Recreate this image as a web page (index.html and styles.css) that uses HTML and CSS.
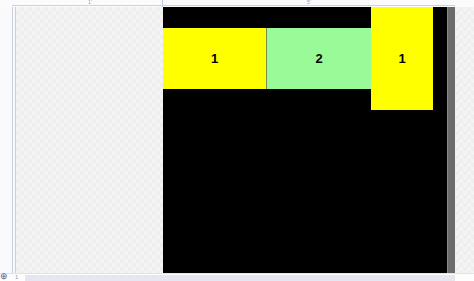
FILE: index.html
```html
<!DOCTYPE html>
<html>
<head>
<meta charset="utf-8">
<link rel="stylesheet" href="styles.css">
</head>
<body>
<div class="page">
  <div class="ruler-top">
    <span class="tick t1">1'</span>
    <span class="tick t2">5'</span>
  </div>
  <div class="ruler-left"></div>
  <div class="canvas-left"></div>
  <div class="stage">
    <div class="box yellow wide">1</div>
    <div class="box green wide">2</div>
    <div class="box yellow tall">1</div>
  </div>
  <div class="vscroll"></div>
  <div class="canvas-right"></div>
  <div class="bottom">
    <span class="corner">&#x2295;</span>
    <span class="bmark">1</span>
    <div class="hscroll"></div>
  </div>
</div>
</body>
</html>
```

FILE: styles.css
```css
html, body {
  margin: 0;
  padding: 0;
  width: 474px;
  height: 281px;
  overflow: hidden;
  background: #f7f7f7;
  font-family: "Liberation Sans", Arial, sans-serif;
}

.page {
  display: grid;
  grid-template-columns: 16px 147px 284px 8px 19px;
  grid-template-rows: 7px 266px 8px;
  width: 474px;
  height: 281px;
}

.ruler-top {
  grid-column: 1 / 6;
  grid-row: 1;
  position: relative;
  background: #fbfbfd;
  background-image:
    linear-gradient(to right, transparent 162px, #b8c6e0 162px, #b8c6e0 163px, transparent 163px),
    linear-gradient(to bottom, transparent 5px, #c9d1e3 5px, #c9d1e3 6px, transparent 6px);
  background-size: 474px 7px, 443px 7px;
  background-position: 0 0, 12px 0;
  background-repeat: no-repeat;
}

.tick {
  position: absolute;
  top: 0;
  font-size: 5px;
  color: #8c9cc0;
  line-height: 5px;
}
.t1 { left: 88px; }
.t2 { left: 307px; }

.ruler-left {
  grid-column: 1;
  grid-row: 2;
  background: #fafafc;
  background-image:
    linear-gradient(to right, transparent 12px, #c7cfe0 12px, #c7cfe0 13px, transparent 13px, transparent 15px, #c7cfe0 15px, #c7cfe0 16px);
}

.canvas-left, .canvas-right {
  grid-row: 2;
  background-color: #f1f1f1;
  background-image: repeating-conic-gradient(#eeeeee 0 25%, #f4f4f4 0 50%);
  background-size: 8px 8px;
}
.canvas-left { grid-column: 2; }
.canvas-right { grid-column: 5; }

.stage {
  grid-column: 3;
  grid-row: 2;
  background: #000;
  display: flex;
  align-items: flex-start;
}

.box {
  display: flex;
  align-items: center;
  justify-content: center;
  font-weight: bold;
  font-size: 13px;
  color: #000;
  box-sizing: border-box;
}

.yellow { background: #ffff00; }
.green { background: #98fb98; border-left: 1px solid #7a8a50; }

.wide {
  margin-top: 21px;
  height: 61px;
}
.box.yellow.wide { width: 103px; }
.box.green.wide { width: 105px; }

.tall {
  width: 62px;
  height: 103px;
}

.vscroll {
  grid-column: 4;
  grid-row: 2;
  background: #6b6b6b;
  border-left: 1px solid #8a8a8a;
  box-sizing: border-box;
}

.bottom {
  grid-column: 1 / 6;
  grid-row: 3;
  position: relative;
  background: #fdfdfe;
  border-top: 1px solid #dfe3ec;
  box-sizing: border-box;
}

.corner {
  position: absolute;
  left: 0;
  top: -2px;
  font-size: 9px;
  line-height: 9px;
  color: #55658a;
}

.bmark {
  position: absolute;
  left: 15px;
  top: 0;
  font-size: 6px;
  line-height: 6px;
  color: #8c9cc0;
}

.hscroll {
  position: absolute;
  left: 25px;
  width: 430px;
  top: 1px;
  bottom: 0;
  background: #e6e6ef;
}
```
